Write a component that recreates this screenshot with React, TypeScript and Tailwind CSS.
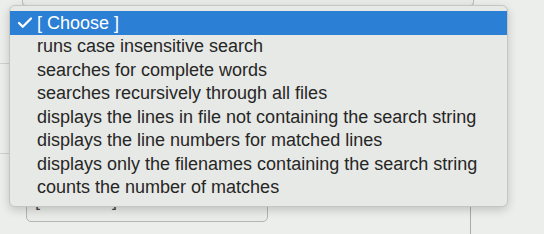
import { Check } from "lucide-react";

const options = [
  "runs case insensitive search",
  "searches for complete words",
  "searches recursively through all files",
  "displays the lines in file not containing the search string",
  "displays the line numbers for matched lines",
  "displays only the filenames containing the search string",
  "counts the number of matches",
];

export default function App() {
  return (
    <div
      className="relative w-[544px] h-[234px] overflow-hidden bg-[#eceeeb] text-[#262626]"
      style={{ fontFamily: '"Liberation Sans", Arial, sans-serif' }}
    >
      {/* select behind, top edge */}
      <div className="ml-[22px] w-[452px] h-[6px] border-x border-b border-[#b9bcb9] rounded-b-[4px] bg-[#e9ebe8]" />
      <div className="mt-[57px] h-px w-[10px] bg-[#cfd1ce]" />
      <div className="mt-[89px] h-px w-[10px] bg-[#cfd1ce]" />

      {/* select behind, bottom */}
      <div className="mt-[42px] ml-[26px] w-[242px] h-[26px] border border-[#b4b6b3] rounded-[5px] bg-[#e9ebe8] flex items-start justify-between px-[8px] overflow-hidden">
        <span className="text-[18px] leading-[12px] -mt-[3px] text-[#444]">[ Choose ]</span>
        <span className="text-[9px] leading-none mt-[1px] text-[#333]">▼</span>
      </div>
      <div className="absolute left-[470px] top-[206px] w-px h-[28px] bg-[#a9aba8]" />

      {/* open menu */}
      <div className="absolute left-[9px] top-[5px] w-[499px] h-[202px] rounded-[6px] border border-[#c3c6c3] bg-[#e6e9e5] shadow-[0_3px_10px_rgba(0,0,0,0.18)] py-[5px]">
        <div className="flex items-center h-[24px] bg-[#2b80d5] text-white text-[18px]">
          <Check className="w-[18px] h-[18px] ml-[6px] mr-[3px]" strokeWidth={3} />
          <span>[ Choose ]</span>
        </div>
        {options.map((o) => (
          <div key={o} className="flex items-center h-[23.5px] pl-[27px] text-[18px] whitespace-nowrap">
            {o}
          </div>
        ))}
      </div>
    </div>
  );
}
